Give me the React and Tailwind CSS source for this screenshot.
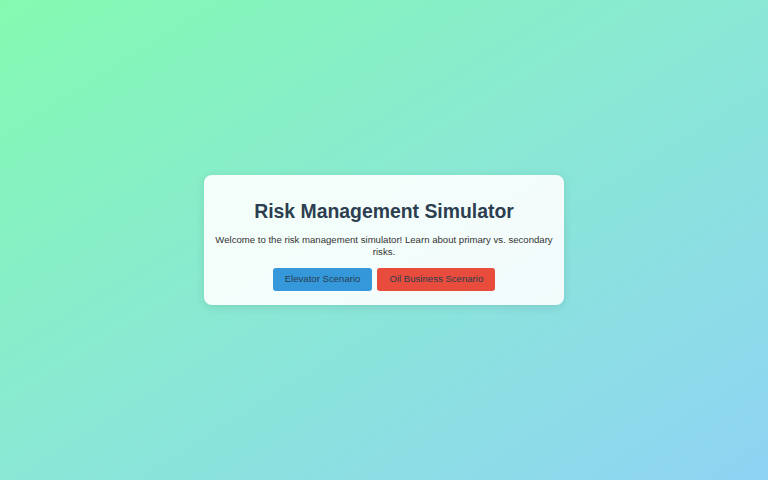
export default function App() {
  return (
    <div
      className="w-full h-screen flex items-center justify-center bg-gradient-to-br from-[#84fab0] to-[#8fd3f4]"
      style={{ fontFamily: '"Liberation Sans", Arial, sans-serif' }}
    >
      <div className="w-[360px] rounded-lg bg-white/90 shadow-[0_2px_10px_rgba(0,0,0,0.1)] px-2 pt-[25px] pb-[14px] text-center">
        <h1 className="text-[19.4px] leading-[23px] font-bold text-[#2c3e50] mb-[11px]">Risk Management Simulator</h1>
        <p className="text-[9.6px] leading-[11.5px] text-[#333] mb-[11px]">
          Welcome to the risk management simulator! Learn about primary vs. secondary risks.
        </p>
        <div className="flex justify-center gap-[5px]">
          <button className="h-[23px] px-3 rounded-[3px] bg-[#3498db] text-[9.6px] text-[#2c3e50]">Elevator Scenario</button>
          <button className="h-[23px] px-3 rounded-[3px] bg-[#e74c3c] text-[9.6px] text-[#2c3e50]">Oil Business Scenario</button>
        </div>
      </div>
    </div>
  );
}
